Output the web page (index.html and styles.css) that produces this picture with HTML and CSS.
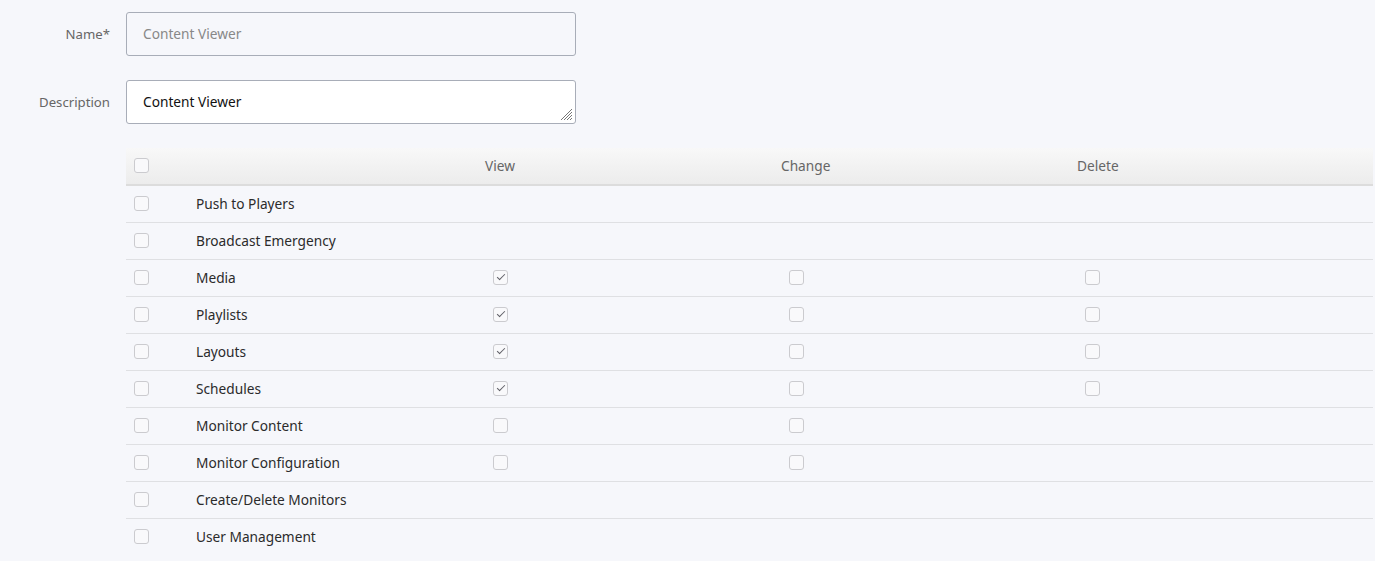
FILE: index.html
```html
<!DOCTYPE html>
<html>
<head>
<meta charset="utf-8">
<link rel="stylesheet" href="styles.css">
</head>
<body>
<div class="page">
  <div class="form-row">
    <label class="label">Name*</label>
    <div class="input input-name">Content Viewer</div>
  </div>
  <div class="form-row">
    <label class="label">Description</label>
    <div class="input input-desc">Content Viewer
      <svg class="grip" width="12" height="12" viewBox="0 0 12 12"><path d="M11 3L3 11M11 6L6 11M11 9L9 11M11 0L0 11" stroke="#777" stroke-width="1"/></svg>
    </div>
  </div>

  <div class="table">
    <div class="row head">
      <div class="cell c0"><span class="cb"></span></div>
      <div class="cell"></div>
      <div class="cell th">View</div>
      <div class="cell th">Change</div>
      <div class="cell th">Delete</div>
    </div>
    <div class="row"><div class="cell c0"><span class="cb"></span></div><div class="cell name">Push to Players</div><div class="cell"></div><div class="cell"></div><div class="cell"></div></div>
    <div class="row"><div class="cell c0"><span class="cb"></span></div><div class="cell name">Broadcast Emergency</div><div class="cell"></div><div class="cell"></div><div class="cell"></div></div>
    <div class="row"><div class="cell c0"><span class="cb"></span></div><div class="cell name">Media</div><div class="cell"><span class="cb on"></span></div><div class="cell"><span class="cb"></span></div><div class="cell"><span class="cb"></span></div></div>
    <div class="row"><div class="cell c0"><span class="cb"></span></div><div class="cell name">Playlists</div><div class="cell"><span class="cb on"></span></div><div class="cell"><span class="cb"></span></div><div class="cell"><span class="cb"></span></div></div>
    <div class="row"><div class="cell c0"><span class="cb"></span></div><div class="cell name">Layouts</div><div class="cell"><span class="cb on"></span></div><div class="cell"><span class="cb"></span></div><div class="cell"><span class="cb"></span></div></div>
    <div class="row"><div class="cell c0"><span class="cb"></span></div><div class="cell name">Schedules</div><div class="cell"><span class="cb on"></span></div><div class="cell"><span class="cb"></span></div><div class="cell"><span class="cb"></span></div></div>
    <div class="row"><div class="cell c0"><span class="cb"></span></div><div class="cell name">Monitor Content</div><div class="cell"><span class="cb"></span></div><div class="cell"><span class="cb"></span></div><div class="cell"></div></div>
    <div class="row"><div class="cell c0"><span class="cb"></span></div><div class="cell name">Monitor Configuration</div><div class="cell"><span class="cb"></span></div><div class="cell"><span class="cb"></span></div><div class="cell"></div></div>
    <div class="row"><div class="cell c0"><span class="cb"></span></div><div class="cell name">Create/Delete Monitors</div><div class="cell"></div><div class="cell"></div><div class="cell"></div></div>
    <div class="row last"><div class="cell c0"><span class="cb"></span></div><div class="cell name">User Management</div><div class="cell"></div><div class="cell"></div><div class="cell"></div></div>
  </div>
</div>
</body>
</html>
```
FILE: styles.css
```css
html, body {
  margin: 0;
  padding: 0;
  background: #f6f7fb;
  font-family: "Noto Sans", "Liberation Sans", sans-serif;
  font-size: 13.7px;
  color: #333;
  overflow: hidden;
}
.page {
  padding: 12px 0 0 0;
}
.form-row {
  display: flex;
  align-items: center;
  margin-bottom: 24px;
}
.label {
  width: 126px;
  text-align: right;
  padding-right: 16px;
  color: #666;
  box-sizing: border-box;
  font-size: 13.2px;
  margin-bottom: 1px;
}
.input {
  position: relative;
  width: 450px;
  height: 44px;
  box-sizing: border-box;
  border: 1px solid #a8adb8;
  border-radius: 3px;
  padding: 0 16px 1px;
  display: flex;
  align-items: center;
}
.input-name {
  background: #f6f7fb;
  color: #888;
}
.input-desc {
  background: #fff;
  color: #111;
}
.grip {
  position: absolute;
  right: 2px;
  bottom: 2px;
}
.table {
  margin-left: 126px;
  margin-top: 2px;
  width: 1247px;
}
.row {
  display: grid;
  grid-template-columns: 62px 297px 296px 296px 296px;
  height: 37px;
  border-bottom: 1px solid #dfe0e3;
  box-sizing: border-box;
  align-items: center;
}
.row.last {
  border-bottom: none;
  height: 36px;
}
.row.head {
  height: 38px;
  background: linear-gradient(#f8f8f8, #ececec);
  border-bottom: 2px solid #dcdcdc;
}
.cell {
  display: flex;
  align-items: center;
  padding-left: 8px;
  height: 100%;
  box-sizing: border-box;
  padding-bottom: 1px;
}
.th {
  padding-left: 0;
  color: #666;
}
.name {
  color: #2b2b2b;
  padding-left: 70px;
  margin-left: -62px;
}
.cb {
  width: 15px;
  height: 15px;
  box-sizing: border-box;
  border: 1px solid #cbcbcf;
  border-radius: 3px;
  background: #f9f9fb;
  position: relative;
  margin-bottom: 1px;
}
.cb.on::after {
  content: "";
  position: absolute;
  left: 3px;
  top: 3px;
  width: 7px;
  height: 3px;
  border-left: 1.5px solid #5f5f66;
  border-bottom: 1.5px solid #5f5f66;
  transform: rotate(-45deg);
  transform-origin: center;
}
```
